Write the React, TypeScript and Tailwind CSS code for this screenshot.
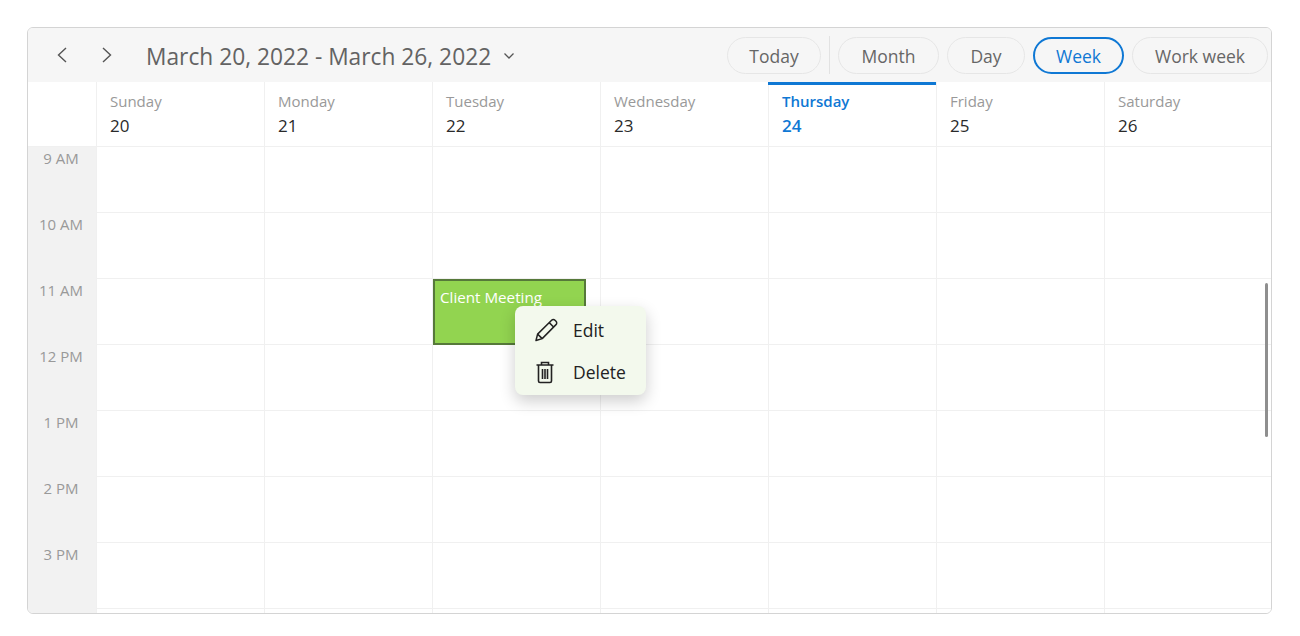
const days = [
  { name: "Sunday", date: 20 },
  { name: "Monday", date: 21 },
  { name: "Tuesday", date: 22 },
  { name: "Wednesday", date: 23 },
  { name: "Thursday", date: 24, today: true },
  { name: "Friday", date: 25 },
  { name: "Saturday", date: 26 },
];

const hours = ["9 AM", "10 AM", "11 AM", "12 PM", "1 PM", "2 PM", "3 PM"];

function ViewButton({ label, width, active }: { label: string; width: string; active?: boolean }) {
  return (
    <button
      className={`h-[37px] rounded-full pt-[2px] text-[17.5px] ${width} ${
        active ? "border-2 border-[#0f78d4] text-[#0f78d4]" : "border border-[#e6e6e6] text-[#666666]"
      }`}
    >
      {label}
    </button>
  );
}

function PencilIcon() {
  return (
    <svg width="24" height="24" viewBox="0 0 24 24" fill="none" stroke="#222" strokeWidth="1.5" strokeLinejoin="round">
      <path d="M2 22.5l1.6-6.4L17.6 2.2a2.4 2.4 0 0 1 3.4 0l1 1a2.4 2.4 0 0 1 0 3.4L8.2 20.6z" />
      <path d="M15.2 4.6l4.4 4.4" />
      <path d="M3.6 16.1l4.6 4.5" />
    </svg>
  );
}

function TrashIcon() {
  return (
    <svg width="22" height="24" viewBox="0 0 22 24" fill="none" stroke="#222" strokeWidth="1.6">
      <path d="M2.5 5h17M7.5 5V2.5h7V5M4.5 5v16a1.5 1.5 0 0 0 1.5 1.5h10a1.5 1.5 0 0 0 1.5-1.5V5" />
      <path d="M8.5 9v10M11 9v10M13.5 9v10" />
    </svg>
  );
}

export default function App() {
  return (
    <div className="h-[636px] w-[1300px] bg-white pl-[27px] pt-[27px] font-['Open_Sans',sans-serif]">
      <div className="relative h-[587px] w-[1245px] overflow-hidden rounded-[6px] border border-[#d4d4d4]">
        {/* toolbar */}
        <div className="flex h-[54px] items-center bg-[#f6f6f6] pr-[3px]">
          <svg className="ml-[27px]" width="14" height="18" viewBox="0 0 14 18" fill="none" stroke="#555" strokeWidth="1.4">
            <path d="M11 2 3.5 9l7.5 7" />
          </svg>
          <svg className="ml-[31px]" width="14" height="18" viewBox="0 0 14 18" fill="none" stroke="#555" strokeWidth="1.4">
            <path d="M3 2l7.5 7L3 16" />
          </svg>
          <span className="ml-[32px] pt-[5px] text-[22.75px] text-[#636363]">March 20, 2022 - March 26, 2022</span>
          <svg className="ml-[12px] mt-[1px]" width="12" height="8" viewBox="0 0 12 8" fill="none" stroke="#555" strokeWidth="1.3">
            <path d="M1.5 1.5 6 6l4.5-4.5" />
          </svg>
          <div className="ml-auto flex items-center">
            <ViewButton label="Today" width="w-[94px]" />
            <div className="mx-[8px] h-[38px] w-px bg-[#e2e2e2]" />
            <div className="flex gap-[8px]">
              <ViewButton label="Month" width="w-[101px]" />
              <ViewButton label="Day" width="w-[78px]" />
              <ViewButton label="Week" width="w-[91px]" active />
              <ViewButton label="Work week" width="w-[136px]" />
            </div>
          </div>
        </div>

        {/* day headers */}
        <div className="flex h-[65px] border-b border-[#f0f0f0]">
          <div className="w-[68px] shrink-0" />
          {days.map((d) => (
            <div
              key={d.name}
              className="relative w-[168px] shrink-0 border-l border-[#f0f0f0] pl-[13px] pt-[8px]"
            >
              {d.today && <div className="absolute -left-px right-0 top-0 h-[3px] bg-[#0f78d4]" />}
              <div className={`text-[15px] leading-[22px] ${d.today ? "font-semibold text-[#0f78d4]" : "text-[#999999]"}`}>
                {d.name}
              </div>
              <div className={`mt-[1px] text-[17px] leading-[26px] ${d.today ? "font-semibold text-[#0f78d4]" : "text-[#2a2a2a]"}`}>
                {d.date}
              </div>
            </div>
          ))}
        </div>

        {/* time grid */}
        <div className="flex">
          <div className="w-[68px] shrink-0 bg-[#f2f2f2] pb-[6px]">
            {hours.map((h) => (
              <div key={h} className="h-[66px] pr-[2px] text-center text-[15px] leading-[22px] text-[#999999]">
                {h}
              </div>
            ))}
          </div>
          <div className="grid h-[466px] flex-1 grid-cols-[repeat(7,168px)] overflow-hidden">
            {hours.concat("").map((h) =>
              days.map((d) => (
                <div key={h + d.name} className="h-[66px] border-b border-l border-[#f0f0f0] bg-white" />
              )),
            )}
          </div>
        </div>

        {/* event */}
        <div className="absolute left-[405px] top-[251px] h-[66px] w-[153px] border-2 border-[#56793a] bg-[#92d450] pl-[5px] pt-[5px] text-[15.2px] leading-[22px] text-white">
          Client Meeting
        </div>

        {/* context menu */}
        <div className="absolute left-[487px] top-[278px] flex h-[89px] w-[131px] flex-col justify-center gap-[11px] rounded-[8px] bg-[#f3f9ed] pl-[19px] shadow-[0_6px_16px_rgba(0,0,0,0.2)]">
          <div className="flex h-[31px] items-center gap-[15px] text-[17.5px] text-[#222]">
            <PencilIcon />
            <span className="pt-[1px]">Edit</span>
          </div>
          <div className="flex h-[31px] items-center gap-[17px] text-[17.5px] text-[#222]">
            <TrashIcon />
            <span className="pt-[1px]">Delete</span>
          </div>
        </div>

        {/* scrollbar */}
        <div className="absolute right-[3px] top-[255px] h-[154px] w-[3px] rounded-full bg-[#8f8f8f]" />
      </div>
    </div>
  );
}
